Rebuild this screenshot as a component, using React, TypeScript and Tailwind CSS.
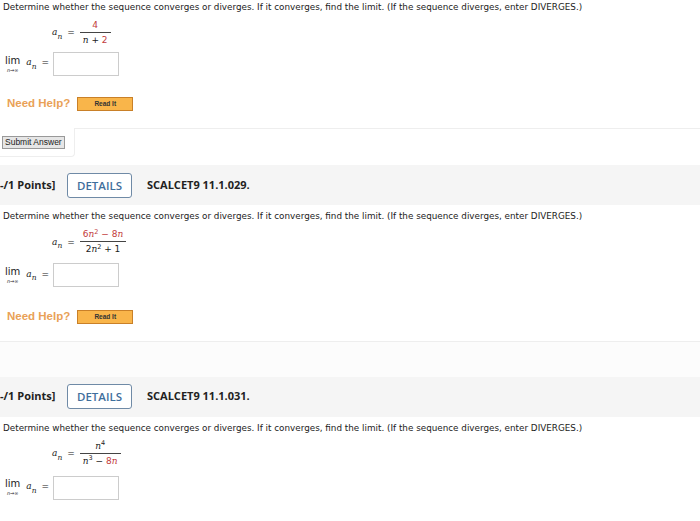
import type { ReactNode } from "react";

const red = "text-[#c23b3b]";

const Q = "Determine whether the sequence converges or diverges. If it converges, find the limit. (If the sequence diverges, enter DIVERGES.)";

const N = () => <i className="font-['DejaVu_Serif',serif]">n</i>;

const An = () => (
  <span className="italic font-['DejaVu_Serif',serif]">
    a<sub className="text-[7.5px] align-[-2px]">n</sub>
  </span>
);

const Fraction = ({ top, bottom }: { top: ReactNode; bottom: ReactNode }) => (
  <span className="inline-flex flex-col items-center leading-none">
    <span className="px-[3px] pb-[2px]">{top}</span>
    <span className="self-stretch border-t border-[#444]" />
    <span className="px-[3px] pt-[3px]">{bottom}</span>
  </span>
);

const Formula = ({ top, bottom }: { top: ReactNode; bottom: ReactNode }) => (
  <div className="flex items-center gap-[5px] pl-[52px] text-[9px] text-[#222]">
    <An />
    <span>=</span>
    <Fraction top={top} bottom={bottom} />
  </div>
);

const LimRow = () => (
  <div className="flex items-center pl-[5px] text-[9px] text-[#222]">
    <span className="flex flex-col items-center leading-none">
      <span className="text-[10px]">lim</span>
      <span className="text-[5px] mt-[2px] italic">n→∞</span>
    </span>
    <span className="ml-[6px] -mt-[2px]"><An /></span>
    <span className="ml-[5px] -mt-[2px]">=</span>
    <div className="ml-[4px] w-[66px] h-[24px] border border-[#ccc] bg-white" />
  </div>
);

const NeedHelp = () => (
  <div className="flex items-center pl-[7px]">
    <span className="font-['Liberation_Sans',sans-serif] font-bold text-[11.5px] text-[#e9a157]">Need Help?</span>
    <span className="ml-[7px] w-[56px] h-[14px] flex items-center justify-center border border-[#c98028] bg-[#f9b54a] font-['Liberation_Sans',sans-serif] font-bold text-[6.5px] text-[#333]">
      Read It
    </span>
  </div>
);

const Header = ({ code }: { code: string }) => (
  <div className="flex items-center h-[40px] bg-[#f5f5f5] font-['Open_Sans',sans-serif] font-bold text-[11px] text-[#222]">
    <span className="w-[67px]">-/1 Points]</span>
    <span className="w-[65px] h-[25px] flex items-center justify-center rounded-[3px] border border-[#6f8aa6] bg-white font-semibold text-[11.5px] text-[#3e6e9c]">
      DETAILS
    </span>
    <span className="ml-[15px]">{code}</span>
  </div>
);

const Text = () => (
  <p className="pl-[3px] text-[8.8px] text-[#222] leading-[12px]">{Q}</p>
);

export default function App() {
  return (
    <div className="w-[700px] h-[521px] overflow-hidden bg-white font-['DejaVu_Sans',sans-serif]">
      <div className="pt-[1px]">
        <Text />
        <div className="mt-[8px]">
          <Formula top={<span className={red}>4</span>} bottom={<span><N /> + <span className={red}>2</span></span>} />
        </div>
        <div className="mt-[7px]"><LimRow /></div>
        <div className="mt-[19px]"><NeedHelp /></div>
        <div className="mt-[16px] flex h-[29px]">
          <div className="w-[75px] flex items-center pl-[2px] border-r border-b border-[#eee] rounded-br-[4px]">
            <span className="px-[2px] h-[13px] flex items-center border border-[#999] bg-[#e6e6e6] font-['Liberation_Sans',sans-serif] text-[8.5px] text-[#222]">
              Submit Answer
            </span>
          </div>
          <div className="flex-1 border-t border-[#eee]" />
        </div>
      </div>
      <div className="mt-[8px]"><Header code="SCALCET9 11.1.029." /></div>
      <div className="pt-[5px]">
        <Text />
        <div className="mt-[8px]">
          <Formula
            top={<span className={red}>6<N /><sup className="text-[6.5px]">2</sup> − 8<N /></span>}
            bottom={<span>2<N /><sup className="text-[6.5px]">2</sup> + 1</span>}
          />
        </div>
        <div className="mt-[9px]"><LimRow /></div>
        <div className="mt-[21px]"><NeedHelp /></div>
      </div>
      <div className="mt-[15px] h-[36px] border-t border-[#eee] bg-[#fcfcfc]" />
      <Header code="SCALCET9 11.1.031." />
      <div className="pt-[5px]">
        <Text />
        <div className="mt-[8px]">
          <Formula
            top={<span><N /><sup className="text-[6.5px]">4</sup></span>}
            bottom={<span><N /><sup className="text-[6.5px]">3</sup> − <span className={red}>8<N /></span></span>}
          />
        </div>
        <div className="mt-[10px]"><LimRow /></div>
      </div>
    </div>
  );
}
